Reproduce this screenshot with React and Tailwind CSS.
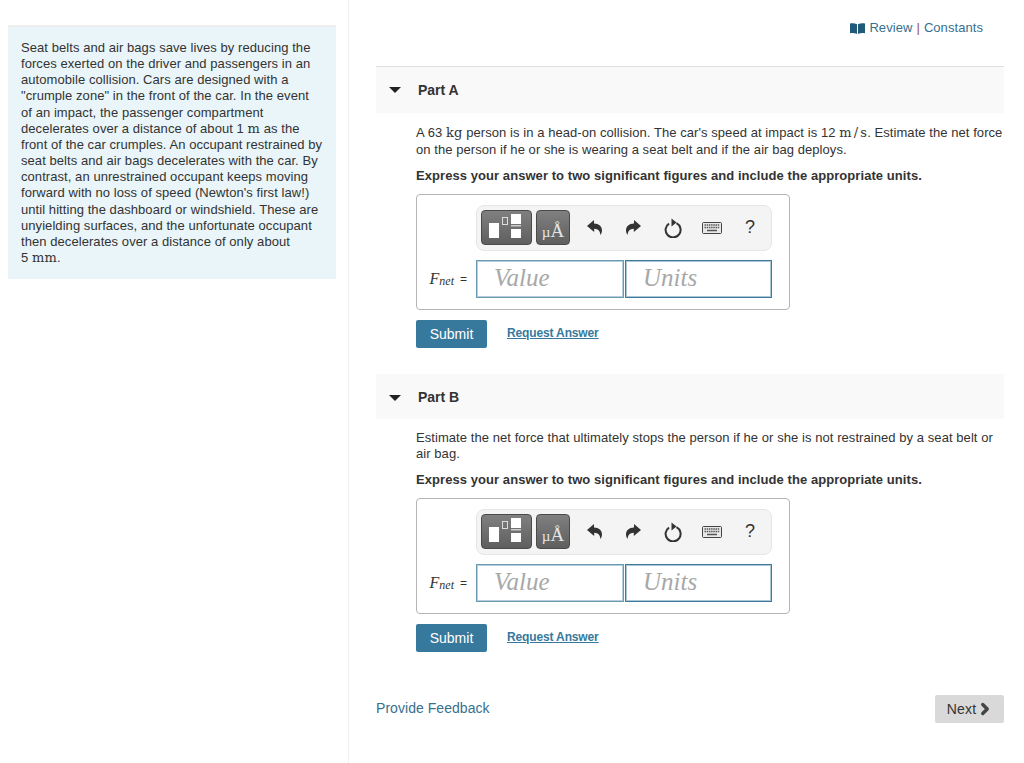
import { ChevronRight } from "lucide-react";

const sans = "font-['Liberation_Sans',Arial,sans-serif]";
const serif = "font-['Liberation_Serif','Times_New_Roman',serif]";

// latin modern looking unit text
const Unit = ({ children }) => (
  <span className="font-['DejaVu_Serif',serif] text-[13px] tracking-[0.2px]">{children}</span>
);

const BookIcon = () => (
  <svg width="15" height="11" viewBox="0 0 15 11">
    <path d="M0 0.500C2.500 0 5 0.200 7 1.200V11C5 10 2.500 9.800 0 10.300z" fill="#1f5a78" />
    <path d="M15 0.500C12.500 0 10 0.200 8 1.200V11C10 10 12.500 9.800 15 10.300z" fill="#1f5a78" />
  </svg>
);

const Toolbar = () => (
  <div className="ml-[59px] flex h-[46px] w-[296px] items-center rounded-lg border border-[#e6e6e6] bg-[#f4f4f4] pb-[1px] pl-[4px]">
    <div className="h-[35px] w-[51px] rounded-[4px] border border-[#4a4a4a] bg-gradient-to-b from-[#808080] to-[#5f5f5f]">
      <svg width="49" height="33" viewBox="0 0 49 33">
        <rect x="7" y="12" width="10" height="15" fill="#fff" />
        <rect x="20.500" y="6.500" width="5" height="7" fill="none" stroke="#ddd" />
        <rect x="29" y="3" width="10" height="10" fill="#fff" />
        <rect x="29" y="14" width="10" height="1.500" fill="#ccc" />
        <rect x="29" y="18" width="10" height="9" fill="#fff" />
      </svg>
    </div>
    <div className={`ml-[4px] flex h-[35px] w-[34px] items-end justify-center rounded-[4px] border border-[#4a4a4a] bg-gradient-to-b from-[#808080] to-[#5f5f5f] pb-[4px] leading-none text-[#e4e4e4] ${serif}`}>
      <span className="text-[15px]">µ</span>
      <span className="text-[19px]">Å</span>
    </div>
    <svg className="ml-[17px]" width="15" height="15" viewBox="0 0 15 15">
      <path d="M0 6 7 0v3.500c5 0 8 3 8 7 0 1.800-.6 3.300-1.800 4.500.3-3.500-2-6.300-6-6.300V12z" fill="#333" />
    </svg>
    <svg className="ml-[24px]" width="15" height="15" viewBox="0 0 15 15">
      <path d="M15 6 8 0v3.500c-5 0-8 3-8 7 0 1.800.6 3.300 1.800 4.500-.3-3.500 2-6.300 6-6.300V12z" fill="#333" />
    </svg>
    <svg className="ml-[23px]" width="18" height="20" viewBox="0 0 18 20">
      <path d="M5 5.600a7.500 7.500 0 1 0 7.500-.4" fill="none" stroke="#333" strokeWidth="2" />
      <path d="M7.500 0.500 12.500 4.500 7.500 8.500z" fill="#333" />
    </svg>
    <svg className="ml-[20px]" width="20" height="12" viewBox="0 0 20 12">
      <rect x="0.500" y="0.500" width="19" height="11" rx="1" fill="#e8e8e8" stroke="#444" />
      <path d="M2.500 3h15M2.500 5.500h15" stroke="#555" strokeWidth="1.500" strokeDasharray="1.500 0.700" />
      <path d="M5 8.500h10" stroke="#555" strokeWidth="1.500" />
    </svg>
    <span className={`ml-[23px] text-[18px] text-[#333] ${sans}`}>?</span>
  </div>
);

const AnswerBox = () => (
  <div className="mt-[9px] h-[116px] w-[374px] rounded-[4px] border border-[#b5b5b5] pt-[10px]">
    <Toolbar />
    <div className="mt-[9px] flex items-center">
      <div className={`flex w-[59px] items-center justify-end pr-[9px] text-[#333] ${serif}`}>
        <i className="text-[16px]">F</i>
        <i className="mr-[6px] mt-[3px] text-[12px]">net</i>
        <span className={`${sans} text-[12px]`}>=</span>
      </div>
      <div className={`flex h-[38px] w-[148px] items-center border border-[#6d9ab3] pb-[2px] pl-[17px] text-[25px] italic text-[#a8a8a8] shadow-[inset_0_0_0_1px_#b4cedb] ${serif}`}>
        Value
      </div>
      <div className={`ml-[1px] flex h-[38px] w-[147px] items-center border border-[#3f7a9a] pb-[2px] pl-[17px] text-[25px] italic text-[#a8a8a8] shadow-[inset_0_0_0_1px_#a9c7d6] ${serif}`}>
        Units
      </div>
    </div>
  </div>
);

const Actions = () => (
  <div className="mt-[10px] flex items-center">
    <button className="h-[28px] w-[71px] rounded-[2px] bg-[#37799c] text-[14px] text-white">Submit</button>
    <a className="mb-[2px] ml-[20px] text-[12px] font-bold tracking-[-0.14px] text-[#37799c] underline">Request Answer</a>
  </div>
);

const PartHeader = ({ title, border }) => (
  <div className={`flex items-center bg-[#f9f9f9] ${border ? "h-[47px] border-t border-[#dfdfdf]" : "h-[45px] pt-[2px]"}`}>
    <span className="ml-[13px] h-0 w-0 border-x-[6px] border-t-[6px] border-x-transparent border-t-[#222]" />
    <span className="ml-[17px] text-[14px] font-bold text-[#333]">{title}</span>
  </div>
);

const Instruction = () => (
  <p className="mt-[9px] text-[13px] font-bold leading-[18px] tracking-[0.065px] text-[#333]">
    Express your answer to two significant figures and include the appropriate units.
  </p>
);

export default function App() {
  return (
    <div className={`flex h-[763px] w-[1024px] overflow-hidden bg-white ${sans}`}>
      {/* Intro passage */}
      <aside className="h-full w-[349px] shrink-0 border-r border-[#f1f1f1] pl-[8px] pt-[25px]">
        <div className="h-[254px] w-[328px] border-t-2 border-[#eeeeee] bg-[#e9f5f8] pl-[13px] pt-[13px] text-[13px] leading-[16.15px] tracking-[0.065px] text-[#333]">
          Seat belts and air bags save lives by reducing the<br />
          forces exerted on the driver and passengers in an<br />
          automobile collision. Cars are designed with a<br />
          "crumple zone" in the front of the car. In the event<br />
          of an impact, the passenger compartment<br />
          decelerates over a distance of about 1 <Unit>m</Unit> as the<br />
          front of the car crumples. An occupant restrained by<br />
          seat belts and air bags decelerates with the car. By<br />
          contrast, an unrestrained occupant keeps moving<br />
          forward with no loss of speed (Newton's first law!)<br />
          until hitting the dashboard or windshield. These are<br />
          unyielding surfaces, and the unfortunate occupant<br />
          then decelerates over a distance of only about<br />
          5 <Unit>mm</Unit>.
        </div>
      </aside>

      {/* Parts */}
      <main className="min-w-0 flex-1 pl-[27px] pr-[20px]">
        <div className="flex h-[66px] justify-end pr-[21px] pt-[20px]">
          <div className="flex h-[16px] items-center text-[13px] tracking-[0.065px] text-[#37708f]">
            <BookIcon />
            <span className="ml-[4px]">Review</span>
            <span className="mx-[4px] text-[#a0553f]">|</span>
            <span>Constants</span>
          </div>
        </div>

        <PartHeader title="Part A" border />
        <section className="pl-[40px]">
          <p className="mt-[11px] whitespace-nowrap text-[13px] leading-[17px] tracking-[0.065px] text-[#333]">
            A 63 <Unit>kg</Unit> person is in a head-on collision. The car's speed at impact is 12 <Unit>m<span className="mx-[2px]">/</span>s</Unit>. Estimate the net force<br />
            on the person if he or she is wearing a seat belt and if the air bag deploys.
          </p>
          <Instruction />
          <AnswerBox />
          <Actions />
        </section>

        <div className="mt-[26px]">
          <PartHeader title="Part B" />
        </div>
        <section className="pl-[40px]">
          <p className="mt-[11px] whitespace-nowrap text-[13px] leading-[16px] tracking-[0.065px] text-[#333]">
            Estimate the net force that ultimately stops the person if he or she is not restrained by a seat belt or<br />
            air bag.
          </p>
          <Instruction />
          <AnswerBox />
          <Actions />
        </section>

        <div className="mt-[43px] flex items-center justify-between">
          <a className="pb-[2px] text-[14px] tracking-[0.05px] text-[#37708f]">Provide Feedback</a>
          <button className="flex h-[28px] w-[69px] items-center justify-center rounded-[2px] bg-[#d9d9d9] pl-[2px] text-[14px] tracking-[0.2px] text-[#333]">
            Next
            <ChevronRight size={18} strokeWidth={4.5} className="text-[#444]" />
          </button>
        </div>
      </main>
    </div>
  );
}
